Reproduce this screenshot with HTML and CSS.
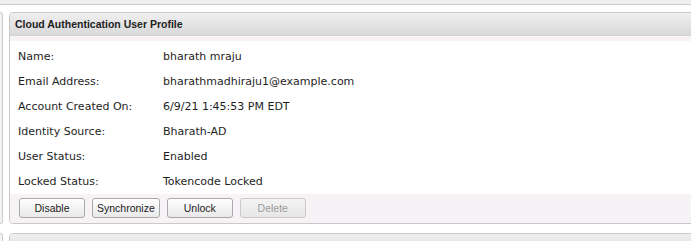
FILE: index.html
```html
<!DOCTYPE html>
<html lang="en">
<head>
    <meta charset="UTF-8">
    <title>Cloud Authentication User Profile</title>
    <link rel="stylesheet" href="styles.css">
</head>
<body>

    <div class="top-strip"></div>

    <div class="workspace">
        <!-- Profile row -->
        <div class="row">
            <div class="side"></div>
            <div class="panel">
                <div class="panel-header">Cloud Authentication User Profile</div>
                <div class="panel-band"></div>
                <div class="details">
                    <div class="detail"><span class="label">Name:</span><span class="value">bharath mraju</span></div>
                    <div class="detail"><span class="label">Email Address:</span><span class="value">bharathmadhiraju1@example.com</span></div>
                    <div class="detail"><span class="label">Account Created On:</span><span class="value">6/9/21 1:45:53 PM EDT</span></div>
                    <div class="detail"><span class="label">Identity Source:</span><span class="value">Bharath-AD</span></div>
                    <div class="detail"><span class="label">User Status:</span><span class="value">Enabled</span></div>
                    <div class="detail"><span class="label">Locked Status:</span><span class="value">Tokencode Locked</span></div>
                </div>
                <div class="button-bar">
                    <button type="button">Disable</button>
                    <button type="button">Synchronize</button>
                    <button type="button">Unlock</button>
                    <button type="button" disabled>Delete</button>
                </div>
            </div>
        </div>

        <!-- Next row (cut off) -->
        <div class="row">
            <div class="side"></div>
            <div class="panel">
                <div class="panel-header"></div>
            </div>
        </div>
    </div>

</body>
</html>
```

FILE: styles.css
```css
body {
    margin: 0;
    background-color: #ffffff;
    font-family: "DejaVu Sans", Verdana, sans-serif;
    font-size: 11px;
    color: #1e1e1e;
    overflow: hidden;
}
.top-strip {
    height: 4px;
    background-color: #efefef;
    border-bottom: 1px solid #cccccc;
}
.workspace {
    display: flex;
    flex-direction: column;
    gap: 9px;
    padding-top: 7px;
}
.row {
    display: flex;
    gap: 6px;
}
.side {
    width: 2px;
    background-color: #f3f3f3;
    border: 1px solid #cccccc;
    border-left: none;
    border-radius: 0 4px 4px 0;
}
.panel {
    flex: 1;
    margin-right: -10px;
    border: 1px solid #c9c9c9;
    border-radius: 4px;
    overflow: hidden;
}
.panel-header {
    height: 22px;
    line-height: 22px;
    padding-left: 5px;
    background: linear-gradient(#efefef, #d9d9d9);
    border-bottom: 1px solid #d2d2d2;
    font-family: "Liberation Sans", Arial, sans-serif;
    font-size: 10.5px;
    font-weight: bold;
    color: #222222;
}
.panel-band {
    height: 5px;
    background-color: #f7f2f5;
}
.details {
    padding-top: 3px;
}
.detail {
    display: flex;
    height: 25px;
    line-height: 25px;
    padding-left: 8px;
}
.label {
    width: 145px;
}
.button-bar {
    display: flex;
    gap: 7px;
    padding: 4px 9px 5px;
    background-color: #f7f2f5;
}
button {
    height: 20px;
    min-width: 66px;
    padding: 0 4px;
    border: 1px solid #a8a8a8;
    border-radius: 3px;
    background: linear-gradient(#ffffff, #e9e9e9);
    font-family: "Liberation Sans", Arial, sans-serif;
    font-size: 10.5px;
    color: #222222;
}
button:disabled {
    border-color: #c9c9c9;
    background: linear-gradient(#f4f4f4, #e6e6e6);
    color: #9c9c9c;
}
```
